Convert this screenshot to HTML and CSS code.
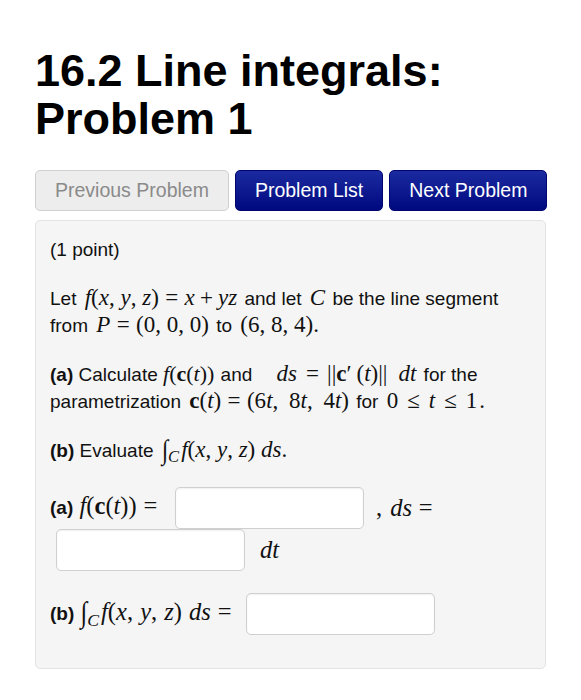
FILE: index.html
```html
<!DOCTYPE html>
<html>
<head>
<meta charset="utf-8">
<link rel="stylesheet" href="styles.css">
</head>
<body>
<div class="page">
  <h1 class="title">16.2 Line integrals: Problem 1</h1>
  <div class="nav">
    <span class="btn btn-disabled">Previous Problem</span>
    <span class="btn btn-primary">Problem List</span>
    <span class="btn btn-primary">Next Problem</span>
  </div>
  <div class="problem">
    <p class="para">(1 point)</p>
    <p class="para">Let <span class="m"><i>f</i>(<i>x</i>, <i>y</i>, <i>z</i>)<span class="rel">=</span><i>x</i><span class="bin">+</span><i>yz</i></span> and let <span class="m"><i>C</i></span> be the line segment from <span class="m"><i>P</i><span class="rel">=</span>(0, 0, 0)</span> to <span class="m">(6, 8, 4).</span></p>
    <p class="para"><b class="lbl">(a)</b> Calculate <span class="m tight"><i>f</i>(<b>c</b>(<i>t</i>))</span> and <span class="m sp"><i>ds</i><span class="rel mid">=</span>||<b>c</b>′<span class="thin"></span>(<i>t</i>)||<span class="gap"></span><i>dt</i></span> for the parametrization <span class="m"><b>c</b>(<i>t</i>)<span class="rel">=</span><span class="tup">(6<i>t</i>, 8<i>t</i>, 4<i>t</i>)</span></span> for <span class="m">0<span class="rel wide">≤</span><i>t</i><span class="rel wide">≤</span>1<span class="dot">.</span></span></p>
    <p class="para"><b class="lbl">(b)</b> Evaluate <span class="m"><span class="int">∫</span><sub class="sub"><i>C</i></sub><i>f</i>(<i>x</i>, <i>y</i>, <i>z</i>) <i>ds</i>.</span></p>
    <div class="answers">
      <div class="row">
        <span class="lead"><b class="lbl">(a)</b> <span class="m ma"><i>f</i>(<b>c</b>(<i>t</i>))<span class="rel">=</span></span></span>
        <span class="field f1"></span>
        <span class="m ma comma">,<i class="ds">ds</i><span class="rel">=</span></span>
      </div>
      <div class="row">
        <span class="field f2"></span>
        <span class="m ma"><i>dt</i></span>
      </div>
    </div>
    <div class="row row-b">
      <span class="lead"><b class="lbl">(b)</b> <span class="m ma"><span class="int">∫</span><sub class="sub"><i>C</i></sub><span class="tup2"><i>f</i>(<i>x</i>, <i>y</i>, <i>z</i>) <i>ds</i></span><span class="rel">=</span></span></span>
      <span class="field f3"></span>
    </div>
  </div>
</div>
</body>
</html>
```
FILE: styles.css
```css
html, body {
  margin: 0;
  padding: 0;
  background: #ffffff;
}
body {
  font-family: "Liberation Sans", Arial, sans-serif;
  color: #111;
}
.page {
  padding: 0 35px;
}
.title {
  margin: 0;
  padding-top: 47px;
  font-size: 45px;
  line-height: 48px;
  font-weight: bold;
  color: #000;
  width: 440px;
}
.nav {
  margin-top: 27px;
  display: flex;
  gap: 6px;
}
.btn {
  display: inline-block;
  font-size: 19.5px;
  line-height: 21px;
  padding: 9px 19px;
  border-radius: 5px;
  border: 1px solid;
  white-space: nowrap;
}
.btn-disabled {
  background: #ededed;
  border-color: #d0d0d0;
  color: #8a8a8a;
}
.btn-primary {
  background: linear-gradient(#1b2aa0, #00097f);
  border-color: #00066c;
  color: #ffffff;
}
.problem {
  margin-top: 9px;
  background: #f5f5f5;
  border: 1px solid #e3e3e3;
  border-radius: 5px;
  padding: 15px 14px 33px 14px;
  font-size: 19px;
  line-height: 27.5px;
  color: #111;
}
.para {
  margin: 0 0 21px 0;
}
.lbl {
  font-weight: bold;
}
.m {
  font-family: "Liberation Serif", "Times New Roman", serif;
  font-size: 23px;
  line-height: 1;
  white-space: nowrap;
  margin: 0 2px 0 3px;
}
.m i {
  font-style: italic;
}
.m b {
  font-weight: bold;
}
.tight {
  margin: 0 1px 0 0;
  font-size: 22px;
}
.sp {
  margin-left: 19px;
}
.thin {
  display: inline-block;
  width: 5px;
}
.gap {
  display: inline-block;
  width: 11px;
}
.dot {
  margin-left: 2px;
}
.rel {
  margin: 0 0.278em;
}
.rel.mid {
  margin: 0 8px 0 9px;
}
.rel.wide {
  margin: 0 9px;
}
.bin {
  margin: 0 0.222em;
}
.tup {
  word-spacing: 5px;
}
.tup2 {
  word-spacing: 1px;
}
.int {
  display: inline-block;
  font-style: italic;
  transform: scaleY(1.2);
}
.sub {
  font-size: 0.72em;
  font-style: italic;
  line-height: 0;
  margin-right: 2px;
}
.answers {
  margin-top: 23px;
}
.row {
  display: flex;
  align-items: center;
  height: 42px;
}
.lead {
  white-space: nowrap;
}
.ma {
  font-size: 24.5px;
  margin-left: 1px;
}
.field {
  display: inline-block;
  box-sizing: border-box;
  width: 189px;
  height: 42px;
  background: #ffffff;
  border: 1px solid #cfcfcf;
  border-radius: 5px;
  box-shadow: inset 0 1px 2px rgba(0, 0, 0, 0.06);
}
.f1 {
  margin-left: 9px;
  margin-right: 11px;
}
.f2 {
  margin-left: 6px;
  margin-right: 14px;
}
.f3 {
  margin-left: 6px;
}
.comma .ds {
  margin-left: 8px;
}
.row-b {
  margin-top: 22px;
}
```
